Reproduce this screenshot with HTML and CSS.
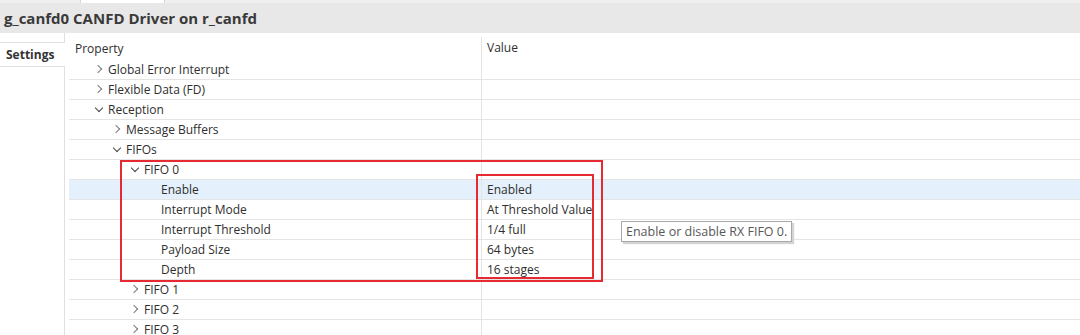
FILE: index.html
```html
<!DOCTYPE html>
<html lang="en">
<head>
    <meta charset="UTF-8">
    <title>g_canfd0 CANFD Driver on r_canfd</title>
    <link rel="stylesheet" href="styles.css">
</head>
<body>
    <div class="tabstrip"><span class="tab-top"></span></div>
    <div class="titlebar">g_canfd0 CANFD Driver on r_canfd</div>

    <div class="main">
        <div class="side">
            <div class="side-tab">Settings</div>
        </div>

        <div class="table">
            <div class="row head">
                <div class="prop">Property</div>
                <div class="val">Value</div>
            </div>

            <div class="row">
                <div class="prop l1"><span class="chev right"></span>Global Error Interrupt</div>
                <div class="val"></div>
            </div>
            <div class="row">
                <div class="prop l1"><span class="chev right"></span>Flexible Data (FD)</div>
                <div class="val"></div>
            </div>
            <div class="row">
                <div class="prop l1"><span class="chev down"></span>Reception</div>
                <div class="val"></div>
            </div>
            <div class="row">
                <div class="prop l2"><span class="chev right"></span>Message Buffers</div>
                <div class="val"></div>
            </div>
            <div class="row">
                <div class="prop l2"><span class="chev down"></span>FIFOs</div>
                <div class="val"></div>
            </div>
            <div class="row">
                <div class="prop l3"><span class="chev down"></span>FIFO 0</div>
                <div class="val"></div>
            </div>
            <div class="row selected">
                <div class="prop l4">Enable</div>
                <div class="val">Enabled</div>
            </div>
            <div class="row">
                <div class="prop l4">Interrupt Mode</div>
                <div class="val">At Threshold Value</div>
            </div>
            <div class="row">
                <div class="prop l4">Interrupt Threshold</div>
                <div class="val">1/4 full</div>
            </div>
            <div class="row">
                <div class="prop l4">Payload Size</div>
                <div class="val">64 bytes</div>
            </div>
            <div class="row">
                <div class="prop l4">Depth</div>
                <div class="val">16 stages</div>
            </div>
            <div class="row">
                <div class="prop l3"><span class="chev right"></span>FIFO 1</div>
                <div class="val"></div>
            </div>
            <div class="row">
                <div class="prop l3"><span class="chev right"></span>FIFO 2</div>
                <div class="val"></div>
            </div>
            <div class="row">
                <div class="prop l3"><span class="chev right"></span>FIFO 3</div>
                <div class="val"></div>
            </div>
        </div>
    </div>

    <!-- annotations drawn over the screenshot -->
    <div class="mark mark-group"></div>
    <div class="mark mark-values"></div>

    <div class="tooltip">Enable or disable RX FIFO 0.</div>
</body>
</html>
```

FILE: styles.css
```css
* {
    box-sizing: border-box;
}

body {
    margin: 0;
    width: 1080px;
    height: 335px;
    overflow: hidden;
    background: white;
    font-family: "Open Sans", "Noto Sans", sans-serif;
    font-size: 12px;
    color: #2e2e2e;
    position: relative;
}

.tabstrip {
    height: 3px;
    background: #f0f0f0;
    position: relative;
}

.tab-top {
    position: absolute;
    left: 80px;
    width: 85px;
    top: 0;
    height: 3px;
    background: white;
    border-left: 1px solid #d6d6d6;
    border-right: 1px solid #d6d6d6;
}

.titlebar {
    height: 30px;
    line-height: 30px;
    background: #e8e8e8;
    padding-left: 4px;
    font-size: 15px;
    font-weight: bold;
    color: #3a3a3a;
}

.main {
    display: flex;
    height: 302px;
}

.side {
    width: 65px;
    border-right: 1px solid #e0e0e0;
    padding-top: 9px;
}

.side-tab {
    height: 25px;
    line-height: 23px;
    border-top: 1px solid #e0e0e0;
    border-bottom: 1px solid #e0e0e0;
    margin-right: -1px;
    background: white;
    padding-left: 6px;
    font-weight: bold;
    font-size: 12px;
    color: #333;
}

.table {
    flex: 1;
    margin-left: 4px;
    padding-top: 4px;
}

.row {
    display: flex;
    height: 20px;
    line-height: 19px;
    border-bottom: 1px solid #e4e4e4;
}

.row.head {
    height: 23px;
    line-height: 22px;
    border-bottom: none;
}

.row.selected {
    background: #e4f0fb;
}

.prop {
    width: 413px;
    flex: none;
    padding-left: 6px;
    border-right: 1px solid #e4e4e4;
    white-space: nowrap;
    display: flex;
    align-items: center;
}

.val {
    flex: 1;
    padding-left: 5px;
    white-space: nowrap;
}

.prop.l1 { padding-left: 26px; }
.prop.l2 { padding-left: 44px; }
.prop.l3 { padding-left: 62px; }
.prop.l4 { padding-left: 92px; }

.chev {
    width: 13px;
    height: 19px;
    flex: none;
    position: relative;
}

.chev::before {
    content: "";
    position: absolute;
    width: 5px;
    height: 5px;
    border-right: 1.3px solid #7a7a7a;
    border-bottom: 1.3px solid #7a7a7a;
}

.chev.right::before {
    left: 0;
    top: 6px;
    transform: rotate(-45deg);
}

.chev.down::before {
    left: 1px;
    top: 5px;
    transform: rotate(45deg);
    border-color: #444;
}

.mark {
    position: absolute;
    border: 2px solid #e52a31;
}

.mark-group {
    left: 120px;
    top: 160px;
    width: 483px;
    height: 122px;
}

.mark-values {
    left: 476px;
    top: 174px;
    width: 118px;
    height: 105px;
}

.tooltip {
    position: absolute;
    left: 621px;
    top: 221px;
    height: 21px;
    line-height: 19px;
    padding: 0 4px;
    background: white;
    border: 1px solid #a8a8a8;
    box-shadow: 2px 2px 1px #d4d4d4;
    color: #585858;
    font-size: 12.5px;
}
```
